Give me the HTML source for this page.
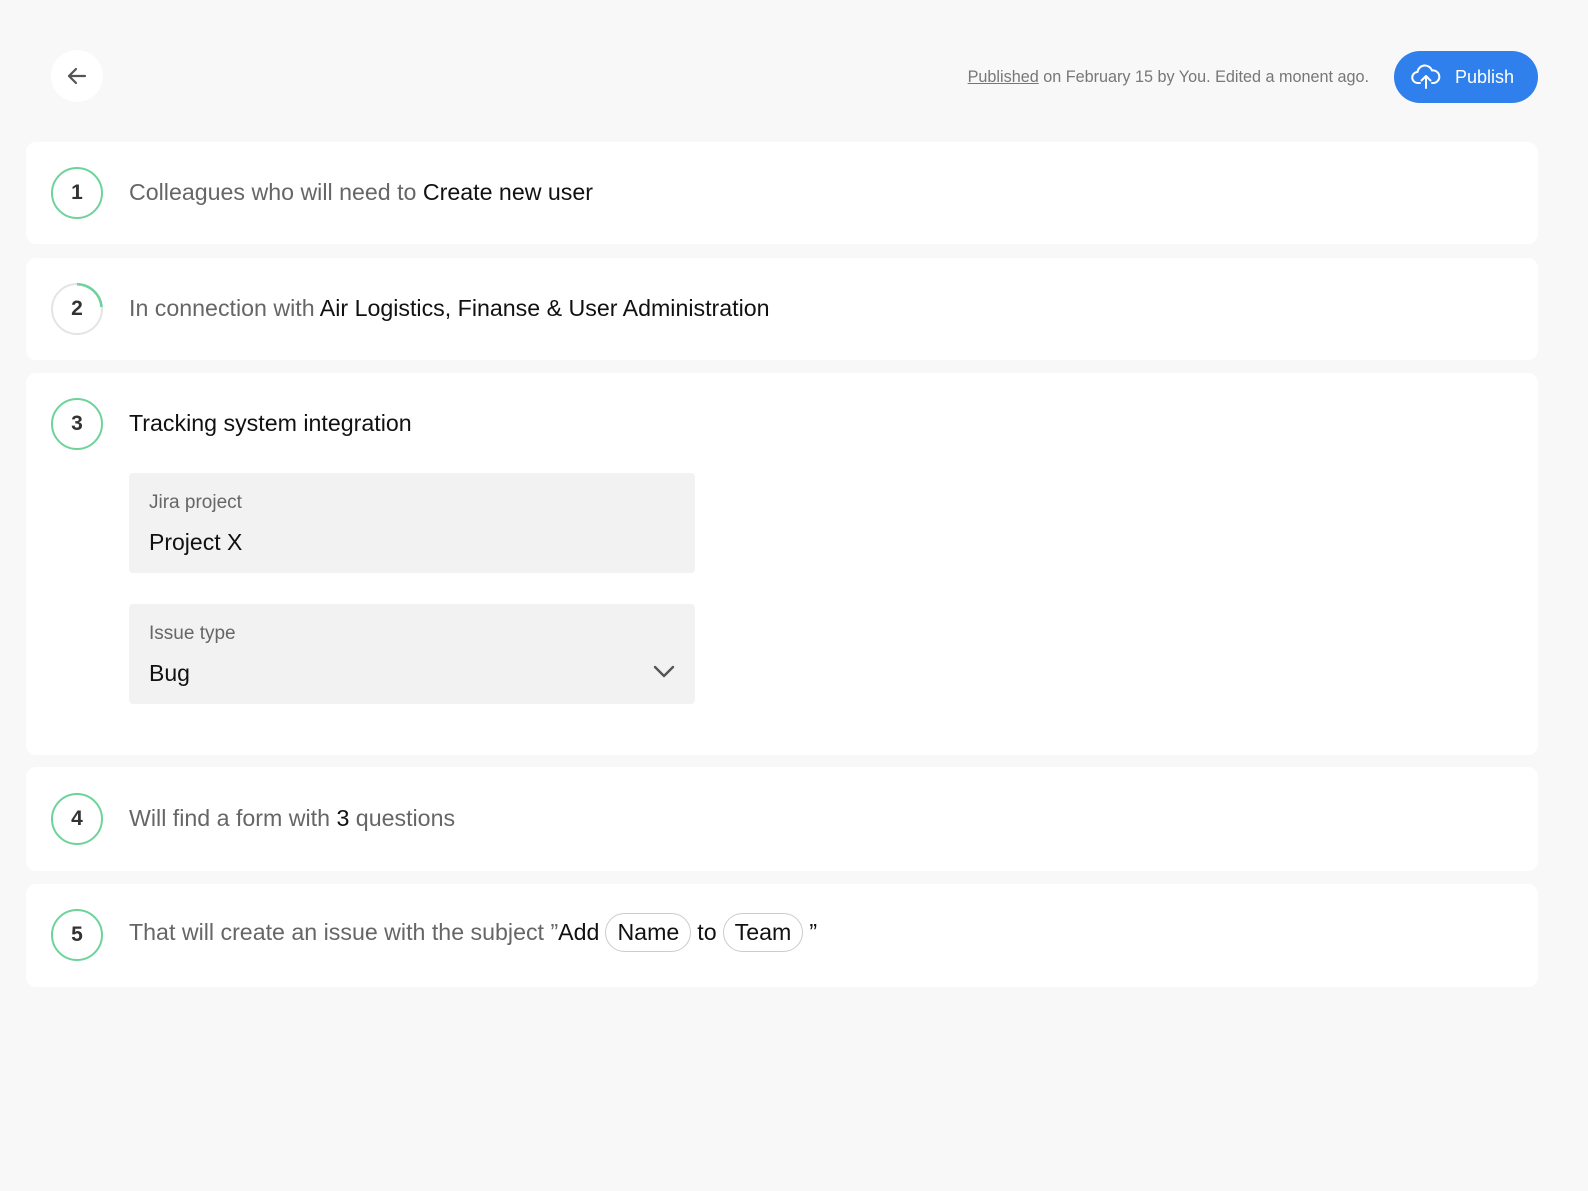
<!DOCTYPE html>
<html><head><meta charset="utf-8"><style>
*{box-sizing:border-box;margin:0;padding:0}
body{width:1588px;height:1191px;background:#f8f8f8;font-family:"Liberation Sans",sans-serif;position:relative;overflow:hidden}
.back{position:absolute;left:51px;top:50px;width:52px;height:52px;border-radius:50%;background:#fff;display:flex;align-items:center;justify-content:center}
.meta{position:absolute;right:219px;top:68px;font-size:16.2px;color:#777}
.meta u{color:#777}
.pub{position:absolute;left:1394px;top:51px;width:144px;height:52px;border-radius:26px;background:#2f80ed;color:#fff;font-size:18px;display:flex;align-items:center;padding-left:17px}
.pub svg{margin-right:14px}
.card{position:absolute;left:26px;width:1512px;background:#fff;border-radius:10px}
.num{position:absolute;left:25px;width:52px;height:52px;border-radius:50%;border:2.5px solid #6dd39a;display:flex;align-items:center;justify-content:center;font-weight:bold;font-size:21px;color:#333}
.txt{position:absolute;left:103px;font-size:23.2px;color:#666;white-space:nowrap}
.txt b{font-weight:normal;color:#111}
.field{position:absolute;left:103px;width:566px;height:100px;background:#f2f2f2;border-radius:4px}
.field .l{position:absolute;left:20px;top:19px;font-size:19px;color:#666}
.field .v{position:absolute;left:20px;top:56px;font-size:23px;color:#111}
.pill{display:inline-block;border:1.5px solid #ccc;border-radius:20px;padding:5px 11px;color:#111;margin:0 6px}
</style></head><body>
<div class="back"><svg width="24" height="24" viewBox="0 0 24 24" fill="none" stroke="#555" stroke-width="2.2" stroke-linecap="round" stroke-linejoin="round"><path d="M20 12H4M11 5l-7 7 7 7"/></svg></div>
<div class="meta"><u>Published</u> on February 15 by You. Edited a monent ago.</div>
<div class="pub"><svg width="30" height="26" viewBox="0 0 30 26" fill="none" stroke="#fff" stroke-width="2" stroke-linecap="round" stroke-linejoin="round"><path d="M9 19H7a5.5 5.5 0 0 1-.5-11A7.5 7.5 0 0 1 21 6.5a5.5 5.5 0 0 1 2 12.5h-2"/><path d="M15 24V12M10.5 16.5 15 12l4.5 4.5"/></svg>Publish</div>

<div class="card" style="top:142px;height:102px">
<div class="num" style="top:25px">1</div>
<div class="txt" style="top:37px">Colleagues who will need to <b>Create new user</b></div></div>

<div class="card" style="top:258px;height:102px">
<div class="num" style="top:25px;border-color:#e4e4e4">2</div>
<svg style="position:absolute;left:25px;top:25px" width="52" height="52" viewBox="0 0 52 52"><path d="M26 1.25A24.75 24.75 0 0 1 50.5 24" fill="none" stroke="#6dd39a" stroke-width="2.5"/></svg>
<div class="txt" style="top:37px">In connection with <b>Air Logistics, Finanse &amp; User Administration</b></div></div>

<div class="card" style="top:373px;height:382px">
<div class="num" style="top:25px">3</div>
<div class="txt" style="top:37px"><b>Tracking system integration</b></div>
<div class="field" style="top:100px"><div class="l">Jira project</div><div class="v">Project X</div></div>
<div class="field" style="top:231px"><div class="l">Issue type</div><div class="v">Bug</div>
<svg style="position:absolute;right:20px;top:61px" width="22" height="14" viewBox="0 0 22 14" fill="none" stroke="#555" stroke-width="2.4" stroke-linecap="round" stroke-linejoin="round"><path d="M2 2l9 9 9-9"/></svg></div></div>

<div class="card" style="top:767px;height:104px">
<div class="num" style="top:26px">4</div>
<div class="txt" style="top:38px">Will find a form with <b>3</b> questions</div></div>

<div class="card" style="top:884px;height:103px">
<div class="num" style="top:25px">5</div>
<div class="txt" style="top:29px">That will create an issue with the subject ”<b>Add</b><span class="pill">Name</span><b>to</b><span class="pill">Team</span><b>”</b></div></div>
</body></html>
